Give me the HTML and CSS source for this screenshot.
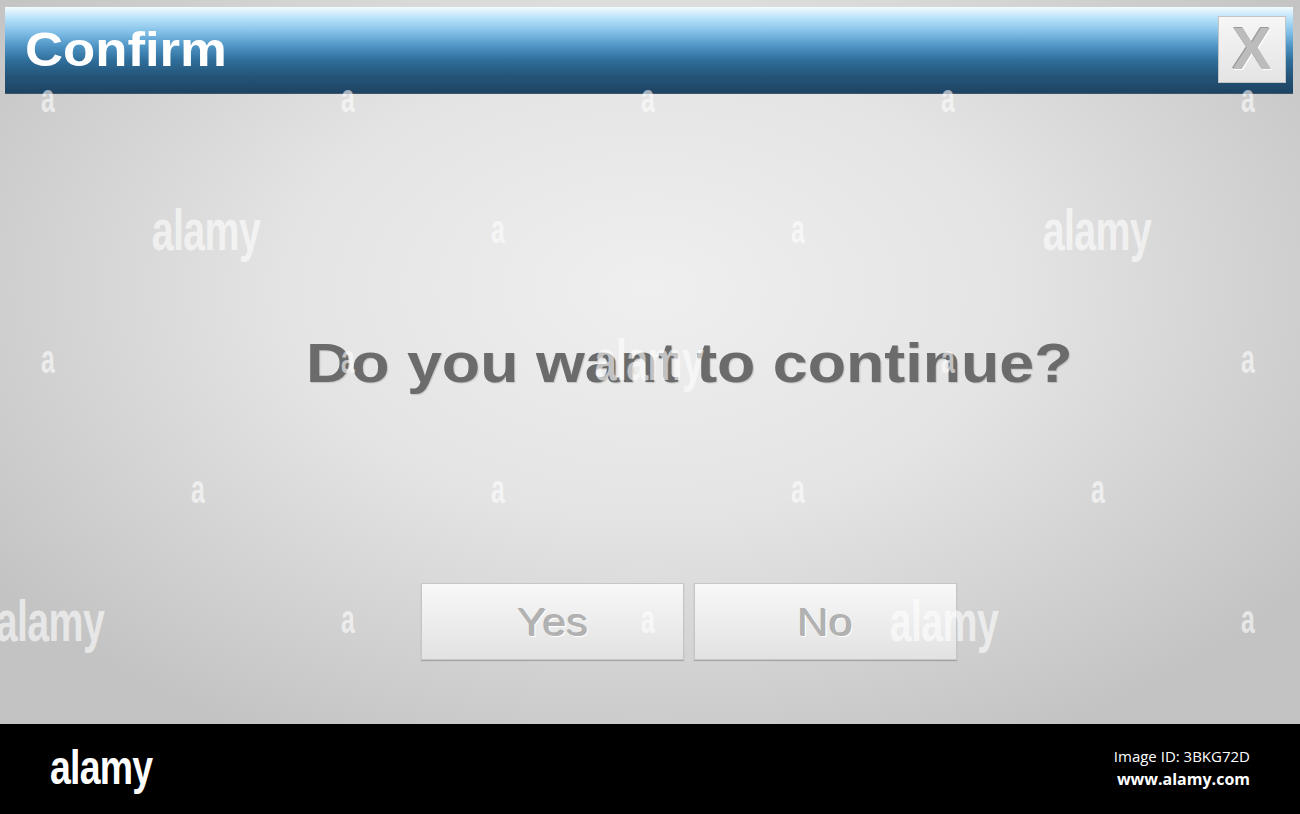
FILE: index.html
```html
<!DOCTYPE html>
<html lang="en">
<head>
    <meta charset="UTF-8">
    <meta name="viewport" content="width=device-width, initial-scale=1.0">
    <title>Confirm</title>
    <link rel="stylesheet" href="styles.css">
</head>
<body>
    <div class="page">
        <div class="dialog">
            <div class="title-bar">
                <h1 class="title">Confirm</h1>
                <button class="close-btn" type="button" aria-label="Close">X</button>
            </div>
            <div class="dialog-body">
                <p class="question">Do you want to continue?</p>
                <div class="actions">
                    <button class="action-btn" type="button"><span class="btn-label">Yes</span></button>
                    <button class="action-btn" type="button"><span class="btn-label">No</span></button>
                </div>
            </div>
        </div>
        <div class="footer">
            <span class="logo">alamy</span>
            <div class="stock-info">
                <span class="image-id">Image ID: 3BKG72D</span>
                <span class="site">www.alamy.com</span>
            </div>
        </div>
        <div class="marks" id="marks"></div>
    </div>

    <script>
        // watermark stamps: [centre x, centre y, text]
        const marks = [
            [48, 98, 'a'], [348, 98, 'a'], [648, 98, 'a'], [948, 98, 'a'], [1248, 98, 'a'],
            [206, 230, 'alamy'], [498, 229, 'a'], [798, 229, 'a'], [1097, 230, 'alamy'],
            [48, 359, 'a'], [348, 359, 'a'], [649, 360, 'alamy'], [948, 359, 'a'], [1248, 359, 'a'],
            [198, 489, 'a'], [498, 489, 'a'], [798, 489, 'a'], [1098, 489, 'a'],
            [50, 621, 'alamy'], [348, 619, 'a'], [648, 619, 'a'], [944, 621, 'alamy'], [1248, 619, 'a']
        ];
        const layer = document.getElementById('marks');
        marks.forEach(([x, y, text]) => {
            const el = document.createElement('span');
            el.className = text === 'a' ? 'mark mark-small' : 'mark mark-word';
            el.textContent = text;
            el.style.left = x + 'px';
            el.style.top = y + 'px';
            layer.appendChild(el);
        });
    </script>
</body>
</html>
```

FILE: styles.css
```css
body {
    margin: 0;
    font-family: "Liberation Sans", Arial, sans-serif;
    background-color: #c8c8c8;
}
.page {
    position: relative;
    width: 1300px;
    height: 814px;
    display: flex;
    flex-direction: column;
    overflow: hidden;
}
.dialog {
    flex: 1;
    display: flex;
    flex-direction: column;
    background: radial-gradient(ellipse 62% 70% at 50% 40%, #efefef 0%, #e4e4e4 45%, #d2d2d2 75%, #c3c3c3 100%);
}
.title-bar {
    margin: 7px 7px 0 5px;
    height: 87px;
    box-sizing: border-box;
    display: flex;
    align-items: center;
    justify-content: space-between;
    padding: 0 7px 2px 20px;
    background: linear-gradient(#f2fbff 0%, #b4e0f8 14%, #7fbde6 30%, #4d93c3 46%, #2f6e9b 62%, #245579 80%, #1e4363 100%);
    border-bottom: 1px solid #3f5569;
}
.title {
    margin: 0;
    color: #fff;
    font-size: 49px;
    font-weight: bold;
    transform: scaleX(1.075);
    transform-origin: left center;
}
.close-btn {
    width: 68px;
    height: 67px;
    padding: 0;
    border: 1px solid #c4c4c4;
    background: linear-gradient(#f6f6f6, #e4e4e4);
    color: #bcbcbc;
    font-family: "Liberation Sans", Arial, sans-serif;
    font-size: 59px;
    font-weight: bold;
    line-height: 1;
    text-shadow: -1px -1px 0 #9a9a9a, 1px 1px 0 #ffffff;
}
.dialog-body {
    flex: 1;
    display: flex;
    flex-direction: column;
    align-items: center;
    padding-left: 78px;
}
.question {
    margin: 241px 0 0;
    color: #6b6b6b;
    font-size: 56px;
    font-weight: bold;
    line-height: 56px;
    transform: scaleX(1.12);
    text-shadow: 1px 1px 1px rgba(0, 0, 0, 0.15);
}
.actions {
    display: flex;
    gap: 10px;
    margin-top: 192px;
}
.action-btn {
    width: 263px;
    height: 77px;
    border: 1px solid #c6c6c6;
    background: linear-gradient(#f8f8f8, #e2e2e2);
    box-shadow: 0 1px 1px rgba(0, 0, 0, 0.2);
    color: #b2b2b2;
    font-family: "Liberation Sans", Arial, sans-serif;
    font-size: 38px;
    padding: 3px 0 0;
    text-shadow: -1px -1px 0 rgba(120, 120, 120, 0.55), 1px 1px 0 #ffffff;
}
.btn-label {
    display: inline-block;
    transform: scaleX(1.14);
}
.footer {
    height: 90px;
    flex-shrink: 0;
    background-color: #000;
    display: flex;
    align-items: center;
    justify-content: space-between;
    padding: 0 50px;
    color: #fff;
}
.logo {
    display: inline-block;
    font-size: 48px;
    font-weight: bold;
    letter-spacing: -1px;
    transform: scaleX(0.78);
    transform-origin: left center;
    margin-top: -4px;
}
.stock-info {
    display: flex;
    flex-direction: column;
    align-items: flex-end;
    font-family: "Open Sans", sans-serif;
    line-height: 23px;
    margin-top: -2px;
}
.image-id {
    font-size: 15px;
}
.site {
    font-size: 16px;
    font-weight: bold;
}
.marks {
    position: absolute;
    inset: 0;
    pointer-events: none;
}
.mark {
    position: absolute;
    transform: translate(-50%, -50%) scaleX(0.62);
    color: rgba(255, 255, 255, 0.6);
    font-weight: bold;
    line-height: 1;
    white-space: nowrap;
}
.mark-small {
    font-size: 40px;
}
.mark-word {
    font-size: 58px;
    letter-spacing: -1px;
    transform: translate(-50%, -50%) scaleX(0.68);
}
```
